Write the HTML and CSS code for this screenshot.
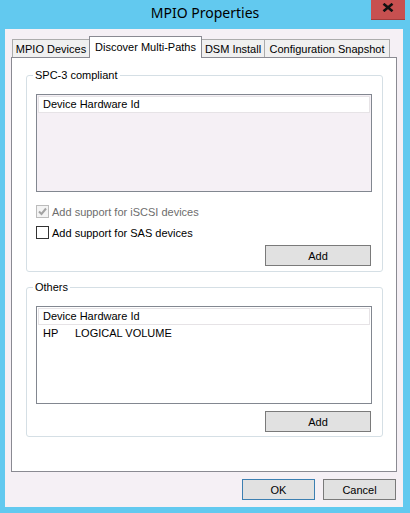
FILE: index.html
```html
<!DOCTYPE html>
<html>
<head>
<meta charset="utf-8">
<title>MPIO Properties</title>
<link rel="stylesheet" href="styles.css">
</head>
<body>
<div class="window">
  <div class="titlebar">
    <span></span>
    <span class="title">MPIO Properties</span>
    <div class="close-wrap">
      <div class="close">
        <svg width="12" height="9" viewBox="0 0 12 9"><path d="M1.5 0.8 L10.5 8.2 M10.5 0.8 L1.5 8.2" stroke="#111" stroke-width="2.6" fill="none"/></svg>
      </div>
    </div>
  </div>
  <div class="client">
    <div class="tabs">
      <div class="tab t1">MPIO Devices</div>
      <div class="tab active t2">Discover Multi-Paths</div>
      <div class="tab t3">DSM Install</div>
      <div class="tab t4">Configuration Snapshot</div>
    </div>
    <div class="panel">
      <fieldset class="group g1">
        <legend>SPC-3 compliant</legend>
        <div class="list disabled">
          <div class="lhead">Device Hardware Id</div>
        </div>
        <div class="check disabled c1">
          <span class="box"><svg width="11" height="11" viewBox="0 0 11 11"><path d="M2 5.5 L4.5 8 L9 2.5" stroke="#a3a3a3" stroke-width="2" fill="none"/></svg></span>
          <span>Add support for iSCSI devices</span>
        </div>
        <div class="check c2">
          <span class="box"></span>
          <span>Add support for SAS devices</span>
        </div>
        <div class="btnrow r1"><button class="btn add">Add</button></div>
      </fieldset>
      <fieldset class="group g2">
        <legend>Others</legend>
        <div class="list">
          <div class="lhead">Device Hardware Id</div>
          <div class="lrow"><span class="vendor">HP</span><span>LOGICAL VOLUME</span></div>
        </div>
        <div class="btnrow r2"><button class="btn add">Add</button></div>
      </fieldset>
    </div>
    <div class="footer">
      <button class="btn dlg default">OK</button>
      <button class="btn dlg">Cancel</button>
    </div>
  </div>
</div>
</body>
</html>
```

FILE: styles.css
```css
html, body {
  margin: 0;
  padding: 0;
}
body {
  font-family: "Liberation Sans", Arial, sans-serif;
  font-size: 11px;
  color: #000;
}
.window {
  width: 410px;
  height: 513px;
  background: #62c9ef;
  display: flex;
  flex-direction: column;
}
.titlebar {
  height: 29px;
  flex: none;
  display: grid;
  grid-template-columns: 1fr auto 1fr;
}
.title {
  font-family: "Noto Sans", "Open Sans", sans-serif;
  font-size: 14px;
  line-height: 26px;
  color: #000;
}
.close-wrap {
  display: flex;
  justify-content: flex-end;
  padding-right: 5px;
}
.close {
  width: 34px;
  height: 20px;
  box-sizing: border-box;
  background: #c75050;
  border-bottom: 1px solid #a33c3c;
  display: flex;
  align-items: center;
  justify-content: center;
  padding-bottom: 5px;
}
.client {
  flex: 1;
  margin: 0 7px 6px 5px;
  background: #f5f0f5;
  padding: 7px 6px 7px 6px;
  display: flex;
  flex-direction: column;
}
.tabs {
  height: 21px;
  display: flex;
  align-items: flex-end;
  padding-left: 1px;
}
.tab {
  box-sizing: border-box;
  height: 18px;
  border: 1px solid #acacac;
  border-bottom: 0;
  background: #f0f0f0;
  display: flex;
  align-items: center;
  justify-content: center;
  margin-right: -1px;
  white-space: nowrap;
}
.tab.active {
  height: 22px;
  margin-bottom: -1px;
  background: #fff;
  border-color: #8a8a92;
  position: relative;
  z-index: 1;
  padding-bottom: 2px;
}
.t1 { width: 78px; }
.t2 { width: 113px; }
.t3 { width: 64px; }
.t4 { width: 126px; }
.panel {
  box-sizing: border-box;
  height: 415px;
  border: 1px solid #8a8a92;
  background: #fff;
  padding: 11px 13px 0 14px;
}
.group {
  margin: 0;
  border: 1px solid #d5dfe5;
  border-radius: 3px;
  padding: 12px 10px 5px 9px;
  min-width: 0;
}
.group legend {
  padding: 0 2px;
  margin-left: -3px;
  line-height: 13px;
  font-size: 11px;
}
.g2 {
  margin-top: 9px;
  padding-bottom: 4px;
}
.list {
  box-sizing: border-box;
  height: 98px;
  border: 1px solid #828790;
  padding: 1px;
  background: #fff;
}
.list.disabled {
  background: #f5f0f5;
}
.lhead {
  box-sizing: border-box;
  height: 17px;
  border: 1px solid #e6e3e6;
  background: #fff;
  padding-left: 4px;
  line-height: 15px;
}
.lrow {
  height: 16px;
  line-height: 16px;
  padding-left: 5px;
  display: flex;
}
.vendor {
  width: 32px;
}
.check {
  display: flex;
  align-items: center;
  height: 13px;
  gap: 3px;
}
.check.disabled {
  color: #6d6d6d;
}
.c1 { margin-top: 13px; }
.c2 { margin-top: 8px; }
.box {
  box-sizing: border-box;
  width: 13px;
  height: 13px;
  border: 1px solid #333;
  background: #fff;
  display: flex;
  align-items: center;
  justify-content: center;
}
.check.disabled .box {
  border-color: #bcbcbc;
  background: #f4f4f4;
}
.btnrow {
  display: flex;
  justify-content: flex-end;
  padding-right: 1px;
}
.r1 { margin-top: 6px; }
.r2 { margin-top: 7px; }
.btn {
  box-sizing: border-box;
  height: 21px;
  border: 1px solid #7a7a7a;
  background: #e1e1e1;
  font-family: inherit;
  font-size: 11px;
  color: #000;
  padding: 0;
  margin: 0;
}
.add { width: 106px; }
.footer {
  display: flex;
  justify-content: flex-end;
  gap: 8px;
  margin-top: 7px;
  padding-right: 1px;
}
.dlg { width: 73px; }
.default {
  border-color: #3c7fb1;
}
```
